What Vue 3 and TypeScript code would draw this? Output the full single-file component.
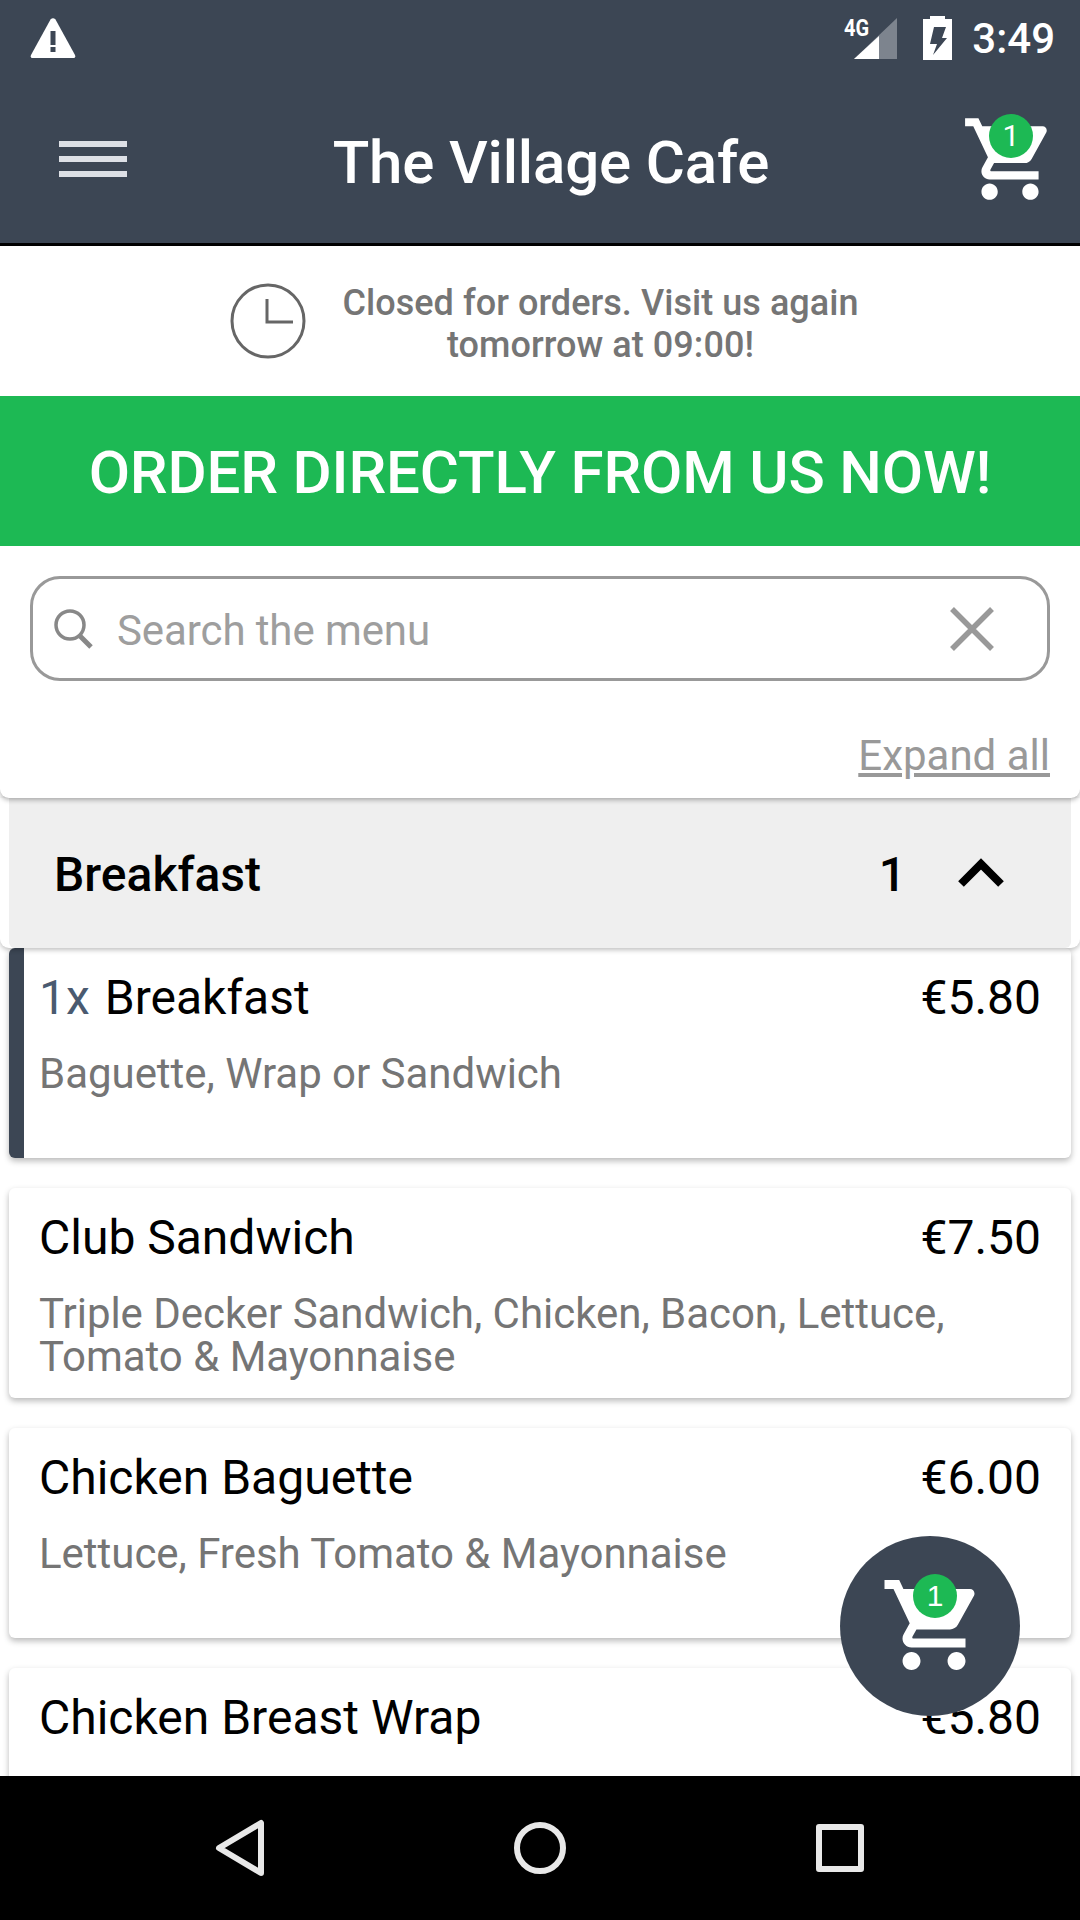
<script setup lang="ts">
interface Item { qty?: string; name: string; price: string; desc: string[] }
const items: Item[] = [
  { qty: '1x', name: 'Breakfast', price: '€5.80', desc: ['Baguette, Wrap or Sandwich'] },
  { name: 'Club Sandwich', price: '€7.50', desc: ['Triple Decker Sandwich, Chicken, Bacon, Lettuce,', 'Tomato & Mayonnaise'] },
  { name: 'Chicken Baguette', price: '€6.00', desc: ['Lettuce, Fresh Tomato & Mayonnaise'] },
  { name: 'Chicken Breast Wrap', price: '€5.80', desc: [] },
]
const cart = 'M7 18c-1.1 0-1.99.9-1.99 2S5.9 22 7 22s2-.9 2-2-.9-2-2-2zM1 2v2h2l3.6 7.59-1.35 2.45c-.16.28-.25.61-.25.96 0 1.1.9 2 2 2h12v-2H7.42c-.14 0-.25-.11-.25-.25l.03-.12.9-1.63h7.45c.75 0 1.41-.41 1.75-1.03l3.58-6.49c.08-.14.12-.31.12-.48 0-.55-.45-1-1-1H5.21l-.94-2H1zm16 16c-1.1 0-1.99.9-1.99 2s.89 2 1.99 2 2-.9 2-2-.9-2-2-2z'
</script>

<template>
  <div class="screen">
    <header class="top">
      <div class="status">
        <svg class="warn" width="46" height="40" viewBox="0 0 46 40">
          <path d="M20.500 1.500 Q23 -1 25.500 1.500 L45 37 Q46 40 43.500 40 L2.500 40 Q0 40 1 37 Z" fill="#fff" />
          <rect x="20.500" y="13" width="5" height="14" fill="#3c4654" />
          <rect x="20.500" y="29" width="5" height="5" fill="#3c4654" />
        </svg>
        <div class="status-right">
          <div class="signal">
            <svg width="44" height="42" viewBox="0 0 44 42">
              <path d="M43 0 V41 H0 Z" fill="#7d848e" />
              <path d="M25 18 V41 H0 Z" fill="#fff" />
            </svg>
            <span class="net">4G</span>
          </div>
          <svg class="batt" width="29" height="44" viewBox="0 0 29 44">
            <path d="M7 0 H22 V3 H29 V44 H0 V3 H7 Z" fill="#fff" />
            <path d="M11 11 H23 L19 22 H24 L10 39 L14 28 H7 Z" fill="#3c4654" />
          </svg>
          <span class="clock-text">3:49</span>
        </div>
      </div>
      <div class="appbar">
        <div class="burger"><i></i><i></i><i></i></div>
        <h1>The Village Cafe</h1>
        <div class="head-cart">
          <svg width="98" height="98" viewBox="0 0 24 24"><path :d="cart" fill="#fff" /></svg>
          <span class="badge">1</span>
        </div>
      </div>
    </header>

    <div class="notice">
      <svg width="76" height="76" viewBox="0 0 76 76" fill="none" stroke="#666" stroke-width="3">
        <circle cx="38" cy="38" r="36" />
        <path d="M37 16 V39 H63" />
      </svg>
      <p>Closed for orders. Visit us again<br />tomorrow at 09:00!</p>
    </div>

    <div class="promo">ORDER DIRECTLY FROM US NOW!</div>

    <main class="content">
      <section class="search-panel">
        <div class="search">
          <svg width="42" height="42" viewBox="0 0 42 42" fill="none" stroke="#888" stroke-width="3.500">
            <circle cx="17" cy="17" r="14" />
            <path d="M27 28 L38 39" stroke-width="5" />
          </svg>
          <span class="placeholder">Search the menu</span>
          <svg class="close" width="44" height="44" viewBox="0 0 44 44" stroke="#999" stroke-width="5.500">
            <path d="M2 2 L42 42 M42 2 L2 42" />
          </svg>
        </div>
        <a class="expand">Expand all</a>
      </section>

      <section class="group">
        <div class="group-head">
          <span class="group-name">Breakfast</span>
          <span class="group-count">1</span>
          <svg width="46" height="30" viewBox="0 0 46 30" fill="none" stroke="#000" stroke-width="8">
            <path d="M3 26 L23 6 L43 26" />
          </svg>
        </div>
      </section>

      <article v-for="item in items" :key="item.name" class="card" :class="{ selected: item.qty }">
        <div class="card-top">
          <span class="name"><span v-if="item.qty" class="qty">{{ item.qty }}</span>{{ item.name }}</span>
          <span class="price">{{ item.price }}</span>
        </div>
        <p class="desc"><span v-for="line in item.desc" :key="line" class="line">{{ line }}</span></p>
      </article>

      <button class="fab">
        <svg width="108" height="108" viewBox="0 0 24 24"><path :d="cart" fill="#fff" /></svg>
        <span class="badge">1</span>
      </button>
    </main>

    <nav class="nav">
      <svg width="60" height="60" viewBox="0 0 60 60" fill="none" stroke="#e8e8e8" stroke-width="6" stroke-linejoin="round">
        <path d="M51 5 V55 L9 30 Z" />
      </svg>
      <svg width="60" height="60" viewBox="0 0 60 60" fill="none" stroke="#e8e8e8" stroke-width="6">
        <circle cx="30" cy="30" r="23" />
      </svg>
      <svg width="60" height="60" viewBox="0 0 60 60" fill="none" stroke="#e8e8e8" stroke-width="6" stroke-linejoin="round">
        <rect x="9" y="9" width="42" height="42" />
      </svg>
    </nav>
  </div>
</template>

<style scoped>
.screen {
  width: 1080px;
  height: 1920px;
  display: flex;
  flex-direction: column;
  overflow: hidden;
  background: #fff;
  font-family: Roboto, "Liberation Sans", sans-serif;
}
.top {
  height: 243px;
  flex: none;
  background: #3c4654;
  border-bottom: 3px solid #000;
  color: #fff;
}
.status {
  height: 75px;
  display: flex;
  justify-content: space-between;
  align-items: center;
  padding: 0 25px 0 30px;
}
.status-right {
  display: flex;
  align-items: center;
  gap: 22px;
}
.signal {
  position: relative;
  width: 44px;
  height: 42px;
  margin-top: 3px;
  margin-right: 3px;
}
.batt {
  margin-right: -2px;
}
.net {
  position: absolute;
  left: -10px;
  top: -1px;
  font-size: 23px;
  font-weight: 700;
  line-height: 23px;
  transform: scaleX(.87);
  transform-origin: left top;
}
.clock-text {
  padding-top: 2px;
  font-size: 42px;
  font-weight: 500;
}
.appbar {
  position: relative;
  height: 168px;
  display: flex;
  align-items: center;
  justify-content: center;
}
.burger {
  position: absolute;
  left: 59px;
  top: 66px;
  display: flex;
  flex-direction: column;
  gap: 9px;
}
.burger i {
  display: block;
  width: 68px;
  height: 6px;
  background: #dde0e6;
}
h1 {
  margin: 0 0 0 22px;
  font-size: 60px;
  font-weight: 500;
  letter-spacing: -.15px;
  line-height: 1;
  padding-top: 8px;
}
.head-cart {
  position: absolute;
  left: 961px;
  top: 35px;
  width: 98px;
  height: 98px;
}
.head-cart .badge { left: 28px; top: 4px; }
.badge {
  position: absolute;
  width: 44px;
  height: 44px;
  border-radius: 50%;
  background: #1db954;
  color: #fff;
  font-size: 30px;
  line-height: 44px;
  text-align: center;
}
.notice {
  height: 150px;
  flex: none;
  box-sizing: border-box;
  display: flex;
  align-items: center;
  justify-content: center;
  gap: 36px;
  padding-left: 9px;
}
.notice p {
  margin: 6px 0 0;
  font-size: 36px;
  font-weight: 500;
  letter-spacing: .05px;
  line-height: 42px;
  color: #757575;
  text-align: center;
}
.promo {
  height: 150px;
  flex: none;
  background: #1db954;
  color: #fff;
  font-size: 60px;
  font-weight: 500;
  letter-spacing: -.15px;
  line-height: 154px;
  text-align: center;
}
.content {
  position: relative;
  flex: 1;
  min-height: 0;
  overflow: hidden;
}
.search-panel {
  position: relative;
  z-index: 3;
  height: 252px;
  box-sizing: border-box;
  padding: 30px 30px 0;
  background: #fff;
  border-radius: 0 0 9px 9px;
  box-shadow: 0 2px 5px rgba(0, 0, 0, .3);
}
.search {
  height: 105px;
  box-sizing: border-box;
  border: 3px solid #999;
  border-radius: 30px;
  display: flex;
  align-items: center;
  padding: 0 53px 0 20px;
}
.placeholder {
  flex: 1;
  margin-left: 22px;
  padding-top: 4px;
  font-size: 42px;
  letter-spacing: -.1px;
  color: #9e9e9e;
}
.expand {
  display: block;
  margin-top: 51px;
  text-align: right;
  font-size: 42px;
  color: #999;
  text-decoration: underline;
  line-height: 48px;
}
.group {
  position: relative;
  z-index: 2;
  height: 150px;
  padding: 0 9px;
  background: #fff;
  border-radius: 0 0 9px 9px;
  box-shadow: 0 2px 5px rgba(0, 0, 0, .25);
}
.group-head {
  height: 150px;
  box-sizing: border-box;
  background: #efefef;
  border-radius: 0 0 6px 6px;
  display: flex;
  align-items: center;
  padding: 0 67px 0 45px;
}
.group-name {
  flex: 1;
  padding-top: 2px;
  font-size: 48px;
  font-weight: 500;
  color: #000;
}
.group-count {
  padding-top: 2px;
  font-size: 48px;
  font-weight: 500;
  color: #000;
  margin-right: 52px;
}
.card {
  box-sizing: border-box;
  height: 210px;
  margin: 0 9px 30px;
  padding: 21px 30px 0;
  background: #fff;
  border-radius: 6px;
  box-shadow: 0 3px 6px rgba(0, 0, 0, .28);
}
.card.selected {
  border-left: 15px solid #3c4654;
  padding-left: 15px;
}
.card-top {
  display: flex;
  justify-content: space-between;
  font-size: 48px;
  line-height: 58px;
  color: #000;
}
.qty {
  color: #4a5a70;
  margin-right: 15px;
}
.desc {
  margin: 25px 0 0;
  font-size: 42px;
  letter-spacing: -.03px;
  line-height: 43px;
  color: #757575;
}
.line { display: block; }
.fab {
  position: absolute;
  z-index: 5;
  left: 840px;
  top: 990px;
  width: 180px;
  height: 180px;
  padding: 0;
  border: 0;
  border-radius: 50%;
  background: #3c4654;
}
.fab svg {
  position: absolute;
  left: 40px;
  top: 35px;
}
.fab .badge { left: 73px; top: 38px; }
.nav {
  height: 144px;
  flex: none;
  background: #000;
  display: flex;
  align-items: center;
  justify-content: space-between;
  padding: 0 210px;
}
</style>

<style>
html, body { margin: 0; }
</style>
